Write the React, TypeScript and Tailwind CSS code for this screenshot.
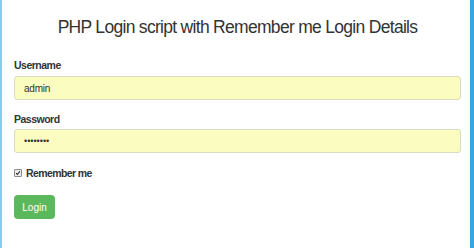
import React, { useState } from 'react'

const App: React.FC = () => {
  const [remember, setRemember] = useState(true)

  return (
    <div className="w-[474px] h-[248px] bg-white border-l-2 border-l-[#7fd0ec] border-r-4 border-r-[#3aa5dc] font-['Liberation_Sans',Arial,sans-serif] text-[#333]">
      <div className="pl-3 pr-[9px] pt-[17px]">
        <h1 className="text-center text-[17.5px] leading-[20px] tracking-[-0.7px] text-[#333]">
          PHP Login script with Remember me Login Details
        </h1>
        <form className="mt-[22px]" onSubmit={(e) => e.preventDefault()}>
          <label className="block text-[10.5px] leading-[12px] tracking-[-0.5px] font-bold mb-[5px]">Username</label>
          <input
            type="text"
            defaultValue="admin"
            className="block w-full h-[24px] px-[9px] text-[10px] tracking-[-0.2px] bg-[#fafcc0] border border-[#d9dcc4] rounded-[3px] outline-none text-[#333]"
          />
          <label className="block text-[10.5px] leading-[12px] tracking-[-0.5px] font-bold mt-[13px] mb-[4px]">Password</label>
          <input
            type="password"
            defaultValue="password"
            className="block w-full h-[24px] px-[9px] text-[9px] bg-[#fafcc0] border border-[#d9dcc4] rounded-[3px] outline-none text-[#333]"
          />
          <label
            className="flex items-center gap-[4px] mt-[14px] text-[10.5px] leading-[13px] tracking-[-0.6px] font-bold cursor-pointer"
            onClick={() => setRemember(!remember)}
          >
            <span className="w-[8px] h-[8px] -mt-[2px] flex items-center justify-center border border-[#8a8a8a] bg-[#ececec] rounded-[1px]">
              {remember && (
                <svg viewBox="0 0 8 8" className="w-[8px] h-[8px]">
                  <path d="M1.5 4.2 L3.2 6 L6.6 1.6" fill="none" stroke="#222" strokeWidth={1.4} />
                </svg>
              )}
            </span>
            Remember me
          </label>
          <button
            type="submit"
            className="mt-[15px] w-[41px] h-[24px] bg-[#5cb85c] text-white text-[10px] rounded-[4px]"
          >
            Login
          </button>
        </form>
      </div>
    </div>
  )
}

export default App
